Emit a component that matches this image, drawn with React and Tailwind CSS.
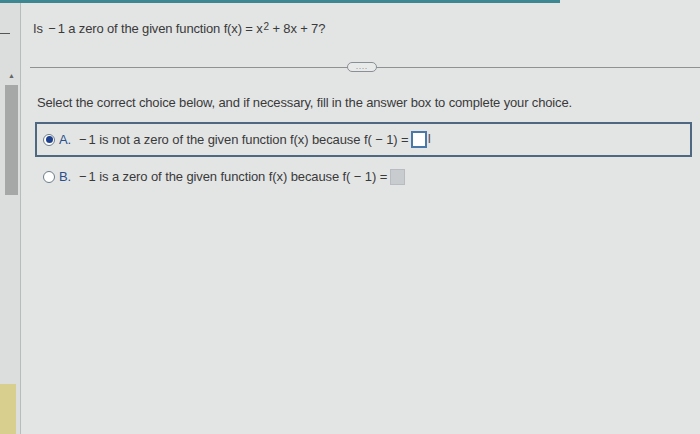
export default function App() {
  return (
    <div className="relative flex h-[434px] w-[700px] overflow-hidden bg-[#e3e5e5] font-['Liberation_Sans',Arial,sans-serif] text-[#3a3a3a]">
      {/* top accent */}
      <div className="absolute left-0 top-0 h-[3px] w-[560px] bg-[#3d8793]" />

      {/* left rail */}
      <div className="flex w-[21px] shrink-0 flex-col border-r border-[#b9bcbc] bg-[#dcdede]">
        <div className="mt-[33px] h-px w-[10px] bg-[#555]" />
        <div className="mt-[38px] ml-[8px] text-[7px] leading-none text-[#666]">▲</div>
        <div className="mt-[6px] ml-[5px] h-[110px] w-[13px] bg-[#a6a8a8]" />
        <div className="mt-auto h-[50px] w-[16px] bg-[#d8cf8e]" />
      </div>

      {/* content */}
      <div className="flex flex-1 flex-col">
        <p className="ml-[12px] mt-[19px] text-[13px] tracking-[-0.15px]">
          Is <span className="mx-[2px]">−</span>1 a zero of the given function f(x) = x<sup className="relative -top-[3px] ml-[1px] text-[10px]">2</sup> + 8x + 7?
        </p>

        <div className="relative mt-[28px] ml-[9px] h-px bg-[#8e9292]">
          <div className="absolute left-[317px] -top-[5px] flex h-[10px] w-[30px] items-center justify-center rounded-full border border-[#8a8f95] bg-[#e8eaea] text-[7px] leading-none tracking-[1px] text-[#555]">
            ....
          </div>
        </div>

        <p className="ml-[16px] mt-[25px] text-[13px] tracking-[-0.15px]">
          Select the correct choice below, and if necessary, fill in the answer box to complete your choice.
        </p>

        <div className="ml-[14px] mr-[8px] mt-[10px] flex h-[35px] items-center border-2 border-[#4d6880] pl-[6px] text-[13px] tracking-[-0.1px]">
          <span className="flex h-[12px] w-[12px] items-center justify-center rounded-full border border-[#6d7c8a] bg-white">
            <span className="h-[7px] w-[7px] rounded-full bg-[#1f3f8f]" />
          </span>
          <span className="ml-[4px] text-[#2a4f8a]">A.</span>
          <span className="ml-[8px]">
            <span className="mr-[2px]">−</span>1 is not a zero of the given function f(x) because f( − 1) =
          </span>
          <span className="ml-[2px] h-[17px] w-[16px] border-2 border-[#4a78a8] bg-white" />
          <span className="ml-[1px] h-[16px] w-[5px] text-[13px] leading-none text-[#556]">I</span>
        </div>

        <div className="ml-[14px] mt-[11px] flex h-[18px] items-center pl-[8px] text-[13px] tracking-[-0.1px]">
          <span className="h-[12px] w-[12px] rounded-full border border-[#6d7c8a] bg-white" />
          <span className="ml-[4px] text-[#2a4f8a]">B.</span>
          <span className="ml-[8px]">
            <span className="mr-[2px]">−</span>1 is a zero of the given function f(x) because f( − 1) =
          </span>
          <span className="ml-[3px] h-[16px] w-[15px] border border-[#b8bcc0] bg-[#c9cccf]" />
        </div>
      </div>
    </div>
  );
}
